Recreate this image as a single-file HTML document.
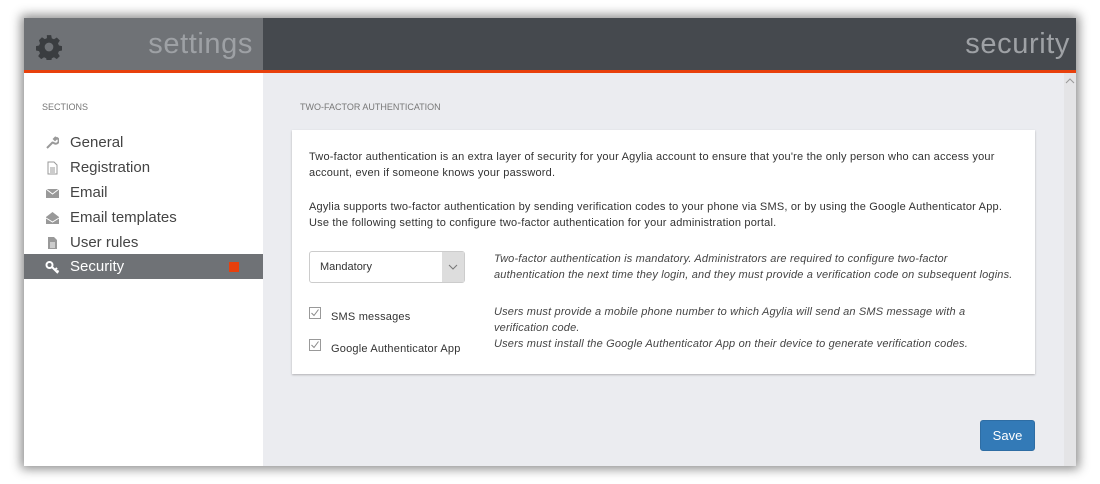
<!DOCTYPE html>
<html><head><style>
*{margin:0;padding:0;box-sizing:border-box}
body{width:1100px;height:484px;background:#fff;position:relative;overflow:hidden;font-family:"Liberation Sans",Arial,sans-serif}
.win{position:absolute;left:24px;top:18px;width:1052px;height:448px;background:#ebecf0;box-shadow:0 0 10px 3px rgba(0,0,0,.45)}
.hl{position:absolute;left:0;top:0;width:239px;height:52px;background:#6f7276}
.hr{position:absolute;left:239px;top:0;right:0;height:52px;background:#45494e}
.or{position:absolute;left:0;right:0;top:52px;height:3px;background:#e8400c}
.t{position:absolute;top:10px;font-size:29px;font-weight:300;color:#9ea1a5;letter-spacing:.6px}
.side{position:absolute;left:0;top:55px;width:239px;bottom:0;background:#fff}
.sec{position:absolute;left:18px;top:29px;font-size:9px;color:#777}
.it{position:absolute;left:0;width:239px;height:25px;font-size:15px;color:#444;line-height:25px;padding-left:46px}
.it svg{position:absolute;left:21px;top:6px}
.act{background:#6f7276;color:#fff}
.sq{position:absolute;right:24px;top:8px;width:10px;height:10px;background:#e8400c}
.h2{position:absolute;left:276px;top:84px;font-size:9px;color:#777}
.card{position:absolute;left:268px;top:112px;width:743px;height:244px;background:#fff;box-shadow:0 1px 2px rgba(0,0,0,.25)}
.p{position:absolute;left:17px;font-size:11px;color:#333;line-height:16px;letter-spacing:.2px}
.i{position:absolute;left:202px;font-size:11px;color:#444;font-style:italic;line-height:16px;letter-spacing:.17px}
.sel{position:absolute;left:17px;top:121px;width:156px;height:32px;border:1px solid #ccc;border-radius:3px;font-size:11px;color:#333;line-height:30px;padding-left:10px}
.sel span{position:absolute;right:0;top:0;width:22px;height:30px;background:#ddd}
.cb{position:absolute;left:17px;width:12px;height:12px;border:1px solid #999}
.cl{position:absolute;left:39px;font-size:11px;color:#333;letter-spacing:.2px}
.save{position:absolute;left:956px;top:402px;width:55px;height:31px;background:#337ab7;border:1px solid #2e6da4;border-radius:3px;color:#fff;font-size:13px;text-align:center;line-height:29px}
.scr{position:absolute;right:0;top:55px;width:12px;bottom:0;background:#e4e4e6}
</style></head><body>
<div class="win">
<div class="hl"><svg style="position:absolute;left:12px;top:16px" width="26" height="26" viewBox="0 0 24 24"><path fill="#3a3d40" d="M10 1h4l.6 3 2 .9 2.6-1.7 2.8 2.8-1.7 2.6.9 2 3 .6v4l-3 .6-.9 2 1.7 2.6-2.8 2.8-2.6-1.7-2 .9-.6 3h-4l-.6-3-2-.9-2.6 1.7-2.8-2.8 1.7-2.6-.9-2-3-.6v-4l3-.6.9-2L2.7 5.8l2.8-2.8 2.6 1.7 2-.9zM12 8a4 4 0 100 8 4 4 0 000-8z"/></svg><div class="t" style="right:10px">settings</div></div>
<div class="hr"><div class="t" style="right:6px">security</div></div>
<div class="or"></div>
<div class="side">
<div class="sec">SECTIONS</div>
<div class="it" style="top:57px"><svg width="14" height="14" viewBox="0 0 14 14"><path d="M2 12l6-6M8 6a3 3 0 104-4l-2 2-1-1 2-2" stroke="#999" stroke-width="2" fill="none"/></svg>General</div>
<div class="it" style="top:82px"><svg width="14" height="14" viewBox="0 0 14 14"><path d="M3 1h6l3 3v9H3z" fill="none" stroke="#999"/><path d="M5 7h5M5 9h5M5 11h5" stroke="#999"/></svg>Registration</div>
<div class="it" style="top:107px"><svg width="15" height="14" viewBox="0 0 15 14"><path d="M1 3h13v9H1z" fill="#999"/><path d="M1 3l6.5 5L14 3" stroke="#fff" fill="none"/></svg>Email</div>
<div class="it" style="top:132px"><svg width="15" height="14" viewBox="0 0 15 14"><path d="M1 6l6.5-5L14 6v7H1z" fill="#999"/><path d="M1 7l6.5 4L14 7" stroke="#fff" fill="none"/></svg>Email templates</div>
<div class="it" style="top:157px"><svg width="14" height="14" viewBox="0 0 14 14"><path d="M3 1h6l3 3v9H3z" fill="#999"/><path d="M5 7h5M5 9h5M5 11h5" stroke="#fff"/></svg>User rules</div>
<div class="it act" style="top:181px"><svg width="15" height="14" viewBox="0 0 15 14"><circle cx="4.5" cy="5" r="3" fill="none" stroke="#fff" stroke-width="2"/><path d="M7 7l6 6M10 10l2-2M12 12l1.5-1.5" stroke="#fff" stroke-width="2"/></svg>Security<div class="sq"></div></div>
</div>
<div class="h2">TWO-FACTOR AUTHENTICATION</div>
<div class="card">
<div class="p" style="top:19px">Two-factor authentication is an extra layer of security for your Agylia account to ensure that you're the only person who can access your<br>account, even if someone knows your password.</div>
<div class="p" style="top:69px">Agylia supports two-factor authentication by sending verification codes to your phone via SMS, or by using the Google Authenticator App.<br>Use the following setting to configure two-factor authentication for your administration portal.</div>
<div class="sel">Mandatory<span><svg width="22" height="30" viewBox="0 0 22 30"><path d="M7 13l4 4 4-4" stroke="#777" fill="none"/></svg></span></div>
<div class="i" style="top:121px">Two-factor authentication is mandatory. Administrators are required to configure two-factor<br>authentication the next time they login, and they must provide a verification code on subsequent logins.</div>
<div class="cb" style="top:177px"><svg width="10" height="10" viewBox="0 0 10 10" style="position:absolute;left:0;top:0"><path d="M1.5 5l2.5 2.5 4.5-6" stroke="#888" fill="none"/></svg></div>
<div class="cl" style="top:181px">SMS messages</div>
<div class="cb" style="top:209px"><svg width="10" height="10" viewBox="0 0 10 10" style="position:absolute;left:0;top:0"><path d="M1.5 5l2.5 2.5 4.5-6" stroke="#888" fill="none"/></svg></div>
<div class="cl" style="top:213px">Google Authenticator App</div>
<div class="i" style="top:174px">Users must provide a mobile phone number to which Agylia will send an SMS message with a<br>verification code.<br>Users must install the Google Authenticator App on their device to generate verification codes.</div>
</div>
<div class="save">Save</div>
<div class="scr"><svg width="12" height="10" viewBox="0 0 12 10"><path d="M2 7l4-4 4 4" stroke="#999" fill="none"/></svg></div>
</div>
</body></html>
